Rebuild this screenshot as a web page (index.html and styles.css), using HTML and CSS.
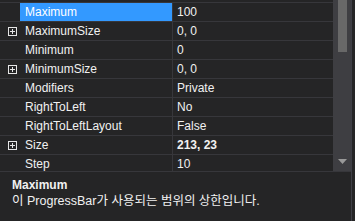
FILE: index.html
```html
<!DOCTYPE html>
<html>
<head>
<meta charset="utf-8">
<link rel="stylesheet" href="styles.css">
</head>
<body>
<div class="window">
  <div class="main">
    <div class="grid">
      <div class="row first sel"><div class="gut"></div><div class="name">Maximum</div><div class="val">100</div></div>
      <div class="row"><div class="gut"><svg class="plus" width="9" height="9" viewBox="0 0 9 9"><rect x="0.5" y="0.5" width="8" height="8" fill="none" stroke="#e6e6e6"/><path d="M2 4.5H7M4.5 2V7" stroke="#e6e6e6"/></svg></div><div class="name">MaximumSize</div><div class="val">0, 0</div></div>
      <div class="row"><div class="gut"></div><div class="name">Minimum</div><div class="val">0</div></div>
      <div class="row"><div class="gut"><svg class="plus" width="9" height="9" viewBox="0 0 9 9"><rect x="0.5" y="0.5" width="8" height="8" fill="none" stroke="#e6e6e6"/><path d="M2 4.5H7M4.5 2V7" stroke="#e6e6e6"/></svg></div><div class="name">MinimumSize</div><div class="val">0, 0</div></div>
      <div class="row"><div class="gut"></div><div class="name">Modifiers</div><div class="val">Private</div></div>
      <div class="row"><div class="gut"></div><div class="name">RightToLeft</div><div class="val">No</div></div>
      <div class="row"><div class="gut"></div><div class="name">RightToLeftLayout</div><div class="val">False</div></div>
      <div class="row"><div class="gut"><svg class="plus" width="9" height="9" viewBox="0 0 9 9"><rect x="0.5" y="0.5" width="8" height="8" fill="none" stroke="#e6e6e6"/><path d="M2 4.5H7M4.5 2V7" stroke="#e6e6e6"/></svg></div><div class="name">Size</div><div class="val bold">213, 23</div></div>
      <div class="row"><div class="gut"></div><div class="name">Step</div><div class="val">10</div></div>
    </div>
    <div class="scroll">
      <div class="thumb"></div>
      <div class="spacer"></div>
      <svg class="arrow" width="9" height="5" viewBox="0 0 9 5"><path d="M0 0H9L4.5 5Z" fill="#999999"/></svg>
    </div>
  </div>
  <div class="desc">
    <div class="title">Maximum</div>
    <div class="text">이 ProgressBar가 사용되는 범위의 상한입니다.</div>
  </div>
</div>
</body>
</html>
```
FILE: styles.css
```css
html, body {
  margin: 0;
  padding: 0;
  background: #252526;
}
body {
  width: 355px;
  height: 221px;
  overflow: hidden;
  font-family: "Liberation Sans", "Noto Sans CJK KR", sans-serif;
  font-size: 12px;
  color: #f1f1f1;
}
.window {
  width: 351px;
  height: 221px;
  border-right: 1px solid #3f3f46;
  display: flex;
  flex-direction: column;
}
.main {
  height: 171px;
  display: flex;
  overflow: hidden;
  flex: none;
}
.grid {
  width: 333px;
  padding-top: 2px;
  flex: none;
}
.row {
  display: flex;
  height: 18px;
  line-height: 18px;
  border-bottom: 1px solid #37373b;
}
.row.first {
  border-top: 1px solid #37373b;
}
.gut {
  width: 20px;
  flex: none;
  background: #252526;
  display: flex;
  align-items: center;
  justify-content: flex-start;
}
.plus {
  margin-left: 8px;
  margin-top: 1px;
}
.name {
  width: 147px;
  padding-left: 5px;
  flex: none;
  white-space: nowrap;
}
.row.sel .name {
  background: #3399ff;
  color: #ffffff;
}
.val {
  flex: 1;
  border-left: 1px solid #37373b;
  padding-left: 4px;
  white-space: nowrap;
}
.bold {
  font-weight: bold;
}
.scroll {
  width: 18px;
  flex: none;
  background: #3e3e42;
  display: flex;
  flex-direction: column;
  align-items: center;
}
.thumb {
  width: 9px;
  height: 52px;
  background: #686868;
  margin-left: 1px;
}
.spacer {
  flex: 1;
}
.arrow {
  margin-left: 1px;
  margin-bottom: 7px;
}
.desc {
  flex: 1;
  border-top: 1px solid #37373b;
  padding: 5px 0 0 12px;
}
.title {
  font-weight: bold;
  line-height: 16px;
}
.text {
  line-height: 16px;
  font-size: 12.5px;
}
```
